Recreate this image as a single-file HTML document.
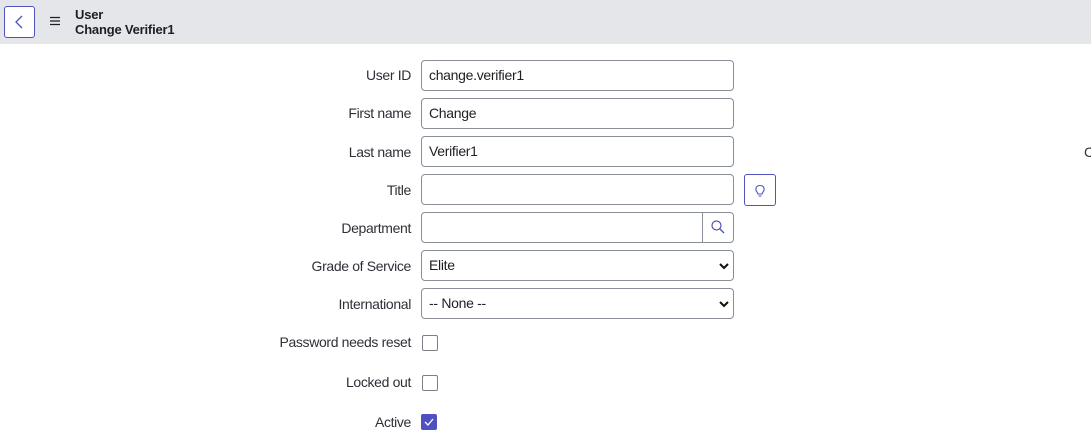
<!DOCTYPE html>
<html><head><style>
body{margin:0;width:1091px;height:444px;overflow:hidden;background:#fff;font-family:"Liberation Sans",sans-serif;color:#1d1f24;position:relative}
.hdr{position:absolute;left:0;top:0;width:1091px;height:44px;background:#e5e6ea}
.back{position:absolute;left:4px;top:6px;width:29px;height:30px;border:1px solid #4f52bd;border-radius:3px;background:#fff}
.t{position:absolute;left:75px;font-size:13px;font-weight:bold;color:#1d1f24;letter-spacing:-0.2px}
.lbl{position:absolute;right:680px;font-size:14px;color:#2e3038;letter-spacing:-0.35px}
.in{position:absolute;left:421px;border:1px solid #8a8e96;border-radius:4px;background:#fff;font-size:14px;line-height:29px;padding-left:7px;box-sizing:border-box;width:313px;height:31px;letter-spacing:-0.3px}
.cb{position:absolute;left:422px;width:14px;height:14px;border:1px solid #7a7f88;border-radius:2px}
</style></head><body>
<div class="hdr">
<div class="back"><svg width="29" height="30"><path d="M17 9 L11 15 L17 21" stroke="#4f52bd" stroke-width="1.3" fill="none"/></svg></div>
<svg style="position:absolute;left:49px;top:16px" width="12" height="10"><path d="M1 1.5H11M1 5H11M1 8.5H11" stroke="#1d1f24" stroke-width="1.3"/></svg>
<div class="t" style="top:7px">User</div>
<div class="t" style="top:22px">Change Verifier1</div>
</div>
<div class="lbl" style="top:67px">User ID</div><div class="in" style="top:60px">change.verifier1</div>
<div class="lbl" style="top:105px">First name</div><div class="in" style="top:98px">Change</div>
<div class="lbl" style="top:144px">Last name</div><div class="in" style="top:136px">Verifier1</div>
<div class="lbl" style="top:182px">Title</div><div class="in" style="top:174px"></div>
<div style="position:absolute;left:744px;top:174px;width:30px;height:30px;border:1px solid #4f52bd;border-radius:3px"><svg width="30" height="30"><path d="M12 17 C10 15 10.5 10.5 15 10.5 C19.5 10.5 20 15 18 17 L17 19 H13 Z M13.5 21 H16.5" stroke="#4f52bd" stroke-width="1.1" fill="none"/></svg></div>
<div class="lbl" style="top:220px">Department</div><div class="in" style="top:212px"></div>
<div style="position:absolute;left:702px;top:212px;width:1px;height:31px;background:#8a8e96"></div>
<svg style="position:absolute;left:710px;top:219px" width="16" height="16"><circle cx="6.5" cy="6.5" r="4.5" stroke="#4f52bd" stroke-width="1.2" fill="none"/><path d="M10 10 L14 14" stroke="#4f52bd" stroke-width="1.3"/></svg>
<div class="lbl" style="top:258px">Grade of Service</div><div class="in" style="top:250px">Elite</div>
<svg style="position:absolute;left:719px;top:262px" width="10" height="8"><path d="M1 2 L5 6 L9 2" stroke="#111" stroke-width="2" fill="none"/></svg>
<div class="lbl" style="top:296px">International</div><div class="in" style="top:288px">-- None --</div>
<svg style="position:absolute;left:719px;top:300px" width="10" height="8"><path d="M1 2 L5 6 L9 2" stroke="#111" stroke-width="2" fill="none"/></svg>
<div class="lbl" style="top:334px">Password needs reset</div><div class="cb" style="top:335px"></div>
<div class="lbl" style="top:374px">Locked out</div><div class="cb" style="top:375px"></div>
<div class="lbl" style="top:414px">Active</div>
<div style="position:absolute;left:421px;top:414px;width:16px;height:16px;background:#5050c0;border-radius:2px"><svg width="16" height="16"><path d="M4 8 L7 11 L12 5" stroke="#fff" stroke-width="1.3" fill="none"/></svg></div>
<div style="position:absolute;left:1084px;top:144px;font-size:14px;color:#2e3038">C</div>
</body></html>
